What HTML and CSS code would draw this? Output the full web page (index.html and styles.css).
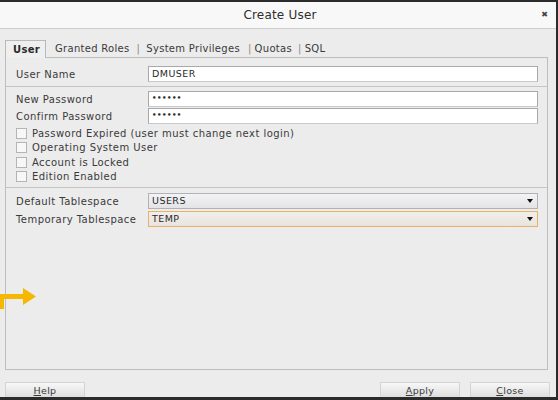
FILE: index.html
```html
<!DOCTYPE html>
<html>
<head>
<meta charset="utf-8">
<link rel="stylesheet" href="styles.css">
</head>
<body>
<div class="window">
  <div class="titlebar">
    <span class="title">Create User</span>
    <span class="close">&#x2716;</span>
  </div>
  <div class="tabs">
    <span class="tab active">User</span>
    <span class="tab t1">Granted Roles</span><span class="sep">|</span>
    <span class="tab t2">System Privileges</span><span class="sep">|</span>
    <span class="tab t3">Quotas</span><span class="sep">|</span>
    <span class="tab t4">SQL</span>
  </div>
  <div class="panel">
    <div class="form first">
      <label>User Name</label>
      <div class="input">DMUSER</div>
    </div>
    <div class="rule"></div>
    <div class="form pw">
      <label>New Password</label>
      <div class="input dots">••••••</div>
      <label>Confirm Password</label>
      <div class="input dots">••••••</div>
    </div>
    <div class="checks">
      <div class="check"><span class="box"></span>Password Expired (user must change next login)</div>
      <div class="check"><span class="box"></span>Operating System User</div>
      <div class="check"><span class="box"></span>Account is Locked</div>
      <div class="check"><span class="box"></span>Edition Enabled</div>
    </div>
    <div class="rule"></div>
    <div class="form ts">
      <label>Default Tablespace</label>
      <div class="select">USERS<span class="caret"></span></div>
      <label>Temporary Tablespace</label>
      <div class="select focus">TEMP<span class="caret"></span></div>
    </div>
  </div>
  <div class="buttons">
    <button class="btn"><u>H</u>elp</button>
    <span class="spacer"></span>
    <button class="btn"><u>A</u>pply</button>
    <button class="btn"><u>C</u>lose</button>
  </div>
  <svg class="arrow" width="40" height="24" viewBox="0 0 40 24">
    <path d="M0 9 H23 V3 L36 11.5 L23 20 V14 H4 V24 H0 Z" fill="#f6b700"/>
  </svg>
</div>
</body>
</html>
```
FILE: styles.css
```css
* { box-sizing: border-box; }
html, body { margin: 0; padding: 0; }
body {
  width: 558px;
  height: 400px;
  overflow: hidden;
  background: #ececec;
  font-family: "DejaVu Sans", sans-serif;
  font-size: 10px;
  color: #3a3a3a;
}
.window {
  position: relative;
  width: 558px;
  height: 400px;
  display: flex;
  flex-direction: column;
  border-top: 2px solid #2b2b2b;
  border-right: 2px solid #2b2b2b;
  border-bottom: 3px solid #2b2b2b;
  background: #ececec;
}
.titlebar {
  height: 27px;
  flex: none;
  background: #f8f8f8;
  border-bottom: 1px solid #cfcfcf;
  display: flex;
  align-items: center;
  justify-content: center;
  position: relative;
}
.title {
  font-size: 12px;
  color: #2e2e2e;
  padding-left: 4px;
  letter-spacing: 0.2px;
}
.close {
  position: absolute;
  right: 8px;
  top: 8px;
  font-size: 8px;
  color: #444;
}
.tabs {
  margin: 11px 0 0 5px;
  height: 17px;
  flex: none;
  display: flex;
  align-items: stretch;
  font-size: 10px;
  letter-spacing: 0.3px;
  color: #3a3a3a;
}
.tab {
  display: flex;
  align-items: center;
}
.tab.active {
  font-weight: bold;
  color: #2a2a2a;
  background: #efefef;
  border: 1px solid #b9b9b9;
  border-bottom: none;
  padding: 0 5px 0 7px;
  position: relative;
  z-index: 1;
  height: 18px;
}
.t1 { padding: 0 7px 0 9px; }
.t2 { padding: 0 8px 0 6px; }
.t3 { padding: 0 6px 0 3px; }
.t4 { padding: 0 0 0 3px; }
.sep {
  display: flex;
  align-items: center;
  color: #8a8a8a;
}
.panel {
  flex: 1;
  margin: 0 8px 0 5px;
  border: 1px solid #bdbdbd;
  background: #ececec;
  padding-top: 8px;
  display: flex;
  flex-direction: column;
  letter-spacing: 0.45px;
}
.form {
  display: grid;
  grid-template-columns: 132px 1fr;
  row-gap: 1px;
  padding: 0 9px 0 10px;
  align-items: center;
}
.form label {
  font-size: 10px;
  color: #3a3a3a;
  padding-top: 1px;
}
.input {
  height: 16px;
  background: #fff;
  border: 1px solid #a9a9a9;
  border-bottom-color: #c9c9c9;
  padding-left: 3px;
  font-size: 9.5px;
  line-height: 14px;
  color: #2a2a2a;
}
.input.dots {
  font-size: 7px;
  font-weight: bold;
  letter-spacing: 0.5px;
  line-height: 13px;
}
.rule {
  height: 1px;
  background: #c4c4c4;
  margin: 4px 0 4px 0;
}
.checks {
  padding: 2px 10px 0 10px;
}
.check {
  height: 14.5px;
  display: flex;
  align-items: center;
  font-size: 10px;
  color: #3a3a3a;
}
.box {
  width: 11px;
  height: 11px;
  border: 1px solid #b4b4b4;
  background: #f7f7f7;
  margin-right: 5px;
  flex: none;
}
.checks + .rule { margin-top: 3px; margin-bottom: 5px; }
.ts { row-gap: 2px; }
.select {
  position: relative;
  height: 16px;
  border: 1px solid #b2b2b2;
  background: linear-gradient(#f3f3f5, #e4e4e7);
  padding-left: 3px;
  font-size: 9.5px;
  line-height: 14px;
  color: #2a2a2a;
}
.select.focus {
  border-color: #e9b06a;
  background: linear-gradient(#f2eeea, #e8e4e0);
}
.caret {
  position: absolute;
  right: 4px;
  top: 5px;
  width: 0;
  height: 0;
  border-left: 3.5px solid transparent;
  border-right: 3.5px solid transparent;
  border-top: 4px solid #111;
}
.buttons {
  height: 27px;
  flex: none;
  display: flex;
  align-items: flex-end;
  padding: 0 6px 0 5px;
  gap: 10px;
}
.spacer { flex: 1; }
.btn {
  width: 80px;
  height: 15px;
  border: 1px solid #d4d4d4;
  border-bottom: none;
  background: linear-gradient(#f7f7f7, #dedede);
  font-family: "DejaVu Sans", sans-serif;
  font-size: 9.5px;
  letter-spacing: 0.3px;
  color: #3a3a3a;
  padding: 0;
  line-height: 13px;
  text-align: center;
}
.arrow {
  position: absolute;
  left: 0;
  top: 283px;
}
```
